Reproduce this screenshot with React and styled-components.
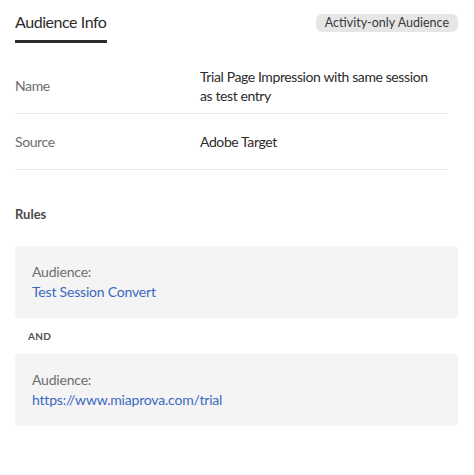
import React from 'react'
import styled, { createGlobalStyle } from 'styled-components'

const GlobalStyle = createGlobalStyle`
  body {
    margin: 0;
    background: #ffffff;
    font-family: 'Lato', 'Noto Sans', sans-serif;
    color: #2c2c2c;
  }
`

const Panel = styled.div`
  width: 474px;
  height: 475px;
  box-sizing: border-box;
  padding: 0 16px 0 15px;
`

const Header = styled.div`
  display: flex;
  justify-content: space-between;
  align-items: flex-start;
  padding-top: 12px;
`

const Tab = styled.div`
  font-size: 16px;
  line-height: 20px;
  color: #2c2c2c;
  padding-bottom: 8px;
  border-bottom: 3px solid #2c2c2c;
  white-space: nowrap;
  letter-spacing: -0.45px;
`

const Badge = styled.span`
  margin-top: 2px;
  background: #e6e6e6;
  border-radius: 6px;
  font-size: 12.5px;
  line-height: 18px;
  padding: 0 9px;
  color: #3a3a3a;
  white-space: nowrap;
`

const Details = styled.div`
  margin-top: 15px;
  margin-right: 10px;
`

const Row = styled.div`
  display: grid;
  grid-template-columns: 185px 1fr;
  align-items: center;
  height: 55px;
  border-bottom: 1px solid #ebebeb;
  font-size: 14px;
  line-height: 19px;
  letter-spacing: -0.4px;
`

const Label = styled.div`
  color: #6e6e6e;
`

const Value = styled.div`
  color: #2c2c2c;
  padding-right: 6px;
`

const SectionTitle = styled.div`
  margin-top: 36px;
  font-size: 13px;
  line-height: 16px;
  font-weight: 700;
  color: #4b4b4b;
`

const Card = styled.div`
  margin-top: ${p => p.first ? 24 : 0}px;
  background: #f4f4f4;
  border-radius: 4px;
  padding: 16px 17px 16px;
  height: 72px;
  box-sizing: border-box;
  font-size: 14px;
  line-height: 20px;
  letter-spacing: -0.2px;
`

const CardLabel = styled.div`
  color: #6e6e6e;
`

const CardLink = styled.a`
  color: #3a68c2;
  text-decoration: none;
  display: block;
`

const Operator = styled.div`
  font-size: 10px;
  font-weight: 700;
  color: #505050;
  letter-spacing: 0.3px;
  padding: 12px 13px 11px;
  line-height: 13px;
`

export default function App() {
  return (
    <>
      <GlobalStyle />
      <Panel>
        <Header>
          <Tab>Audience Info</Tab>
          <Badge>Activity-only Audience</Badge>
        </Header>
        <Details>
          <Row>
            <Label>Name</Label>
            <Value>Trial Page Impression with same session as test entry</Value>
          </Row>
          <Row>
            <Label>Source</Label>
            <Value>Adobe Target</Value>
          </Row>
        </Details>
        <SectionTitle>Rules</SectionTitle>
        <Card first>
          <CardLabel>Audience:</CardLabel>
          <CardLink href="#">Test Session Convert</CardLink>
        </Card>
        <Operator>AND</Operator>
        <Card>
          <CardLabel>Audience:</CardLabel>
          <CardLink href="#">https://www.miaprova.com/trial</CardLink>
        </Card>
      </Panel>
    </>
  )
}
